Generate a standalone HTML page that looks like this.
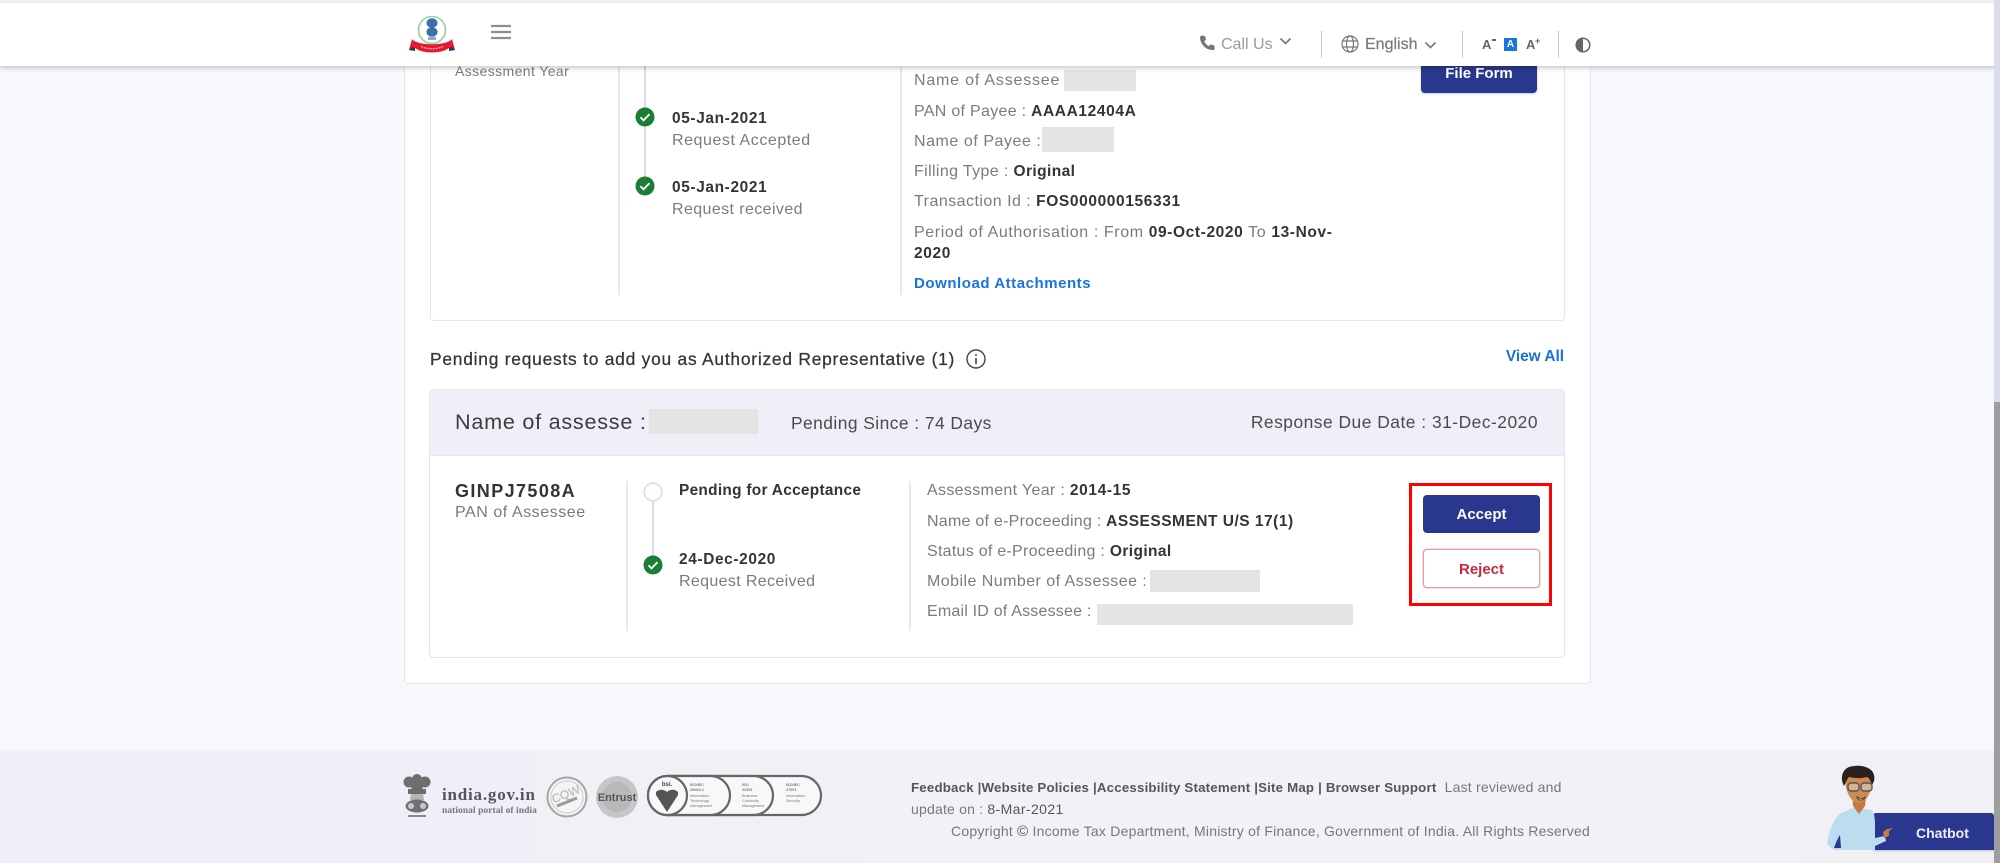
<!DOCTYPE html>
<html lang="en">
<head>
<meta charset="utf-8">
<title>Pending requests</title>
<style>
html,body{margin:0;padding:0;width:2000px;height:863px;overflow:hidden;background:#f7f8fc;font-family:"Liberation Sans",sans-serif}
#p{position:relative;width:2000px;height:863px;overflow:hidden}
#p div,#p svg,#p span.a{position:absolute}
.t{line-height:20px;height:20px;white-space:nowrap;font-size:16px;letter-spacing:.55px;color:#7b7b7f}
.t b{font-weight:700;color:#333338;font-size:15.5px;letter-spacing:.62px}
.d{color:#333338;font-weight:700;font-size:15.4px;letter-spacing:.65px}
.g{background:#e4e4e4}
.v{width:2px;background:#e6e8f2}
.btn{background:#2a378f;border-radius:4px;color:#fff;font-weight:700;font-size:15px;text-align:center}
</style>
</head>
<body>
<div id="p">
<!-- outer card -->
<div style="left:404px;top:40px;width:1185px;height:642px;background:#fff;border:1px solid #e3e5f0;border-radius:0 0 4px 4px"></div>
<!-- top inner card -->
<div style="left:430px;top:40px;width:1133px;height:279px;background:#fff;border:1px solid #e3e5f0;border-radius:0 0 4px 4px"></div>
<div class="t" style="left:455px;top:61px;font-size:14px;letter-spacing:.4px">Assessment Year</div>
<div class="v" style="left:618px;top:60px;height:235px"></div>
<div class="v" style="left:900px;top:60px;height:235px"></div>
<div style="left:644px;top:60px;width:2px;height:126px;background:#d9dcee"></div>
<svg style="left:635px;top:107px" width="20" height="20" viewBox="0 0 20 20"><circle cx="10" cy="10" r="9.5" fill="#1c7d36"/><path d="M5.5 10.3l3 3 6-6" fill="none" stroke="#fff" stroke-width="1.8"/></svg>
<svg style="left:635px;top:176px" width="20" height="20" viewBox="0 0 20 20"><circle cx="10" cy="10" r="9.5" fill="#1c7d36"/><path d="M5.5 10.3l3 3 6-6" fill="none" stroke="#fff" stroke-width="1.8"/></svg>
<div class="t d" style="left:672px;top:109px">05-Jan-2021</div>
<div class="t" style="left:672px;top:131px">Request Accepted</div>
<div class="t d" style="left:672px;top:178px">05-Jan-2021</div>
<div class="t" style="left:672px;top:200px;letter-spacing:.4px">Request received</div>

<div class="t" style="left:914px;top:71px;letter-spacing:.8px">Name of Assessee</div>
<div class="g" style="left:1064px;top:70px;width:72px;height:21px"></div>
<div class="t" style="left:914px;top:102px;letter-spacing:.3px">PAN of Payee : <b>AAAA12404A</b></div>
<div class="t" style="left:914px;top:132px">Name of Payee :</div>
<div class="g" style="left:1042px;top:127px;width:72px;height:25px"></div>
<div class="t" style="left:914px;top:162px;letter-spacing:.37px">Filling Type : <b style="letter-spacing:.4px">Original</b></div>
<div class="t" style="left:914px;top:192px;letter-spacing:.47px">Transaction Id : <b>FOS000000156331</b></div>
<div class="t" style="left:914px;top:223px;letter-spacing:.6px">Period of Authorisation : From <b>09-Oct-2020</b> To <b>13-Nov-</b></div>
<div class="t" style="left:914px;top:244px"><b>2020</b></div>
<div class="t" style="left:914px;top:274px;color:#1a73e0;font-weight:700;font-size:15px">Download Attachments</div>
<div class="btn" style="left:1421px;top:50px;width:116px;height:43px;line-height:47px;box-shadow:0 1px 2px rgba(0,0,0,.2)">File Form</div>

<!-- section heading -->
<div class="t" style="left:430px;top:349px;font-size:17.4px;letter-spacing:.76px;color:#333338;-webkit-text-stroke:.25px #333338">Pending requests to add you as Authorized Representative (1)</div>
<svg style="left:965px;top:348px" width="22" height="22" viewBox="0 0 22 22"><circle cx="11" cy="11" r="9" fill="none" stroke="#444" stroke-width="1.4"/><path d="M11 10v6M11 6.2v1.8" stroke="#444" stroke-width="1.6" fill="none"/></svg>
<div class="t" style="right:436px;top:347px;color:#1d6fd2;font-weight:700;font-size:15.4px;letter-spacing:0">View All</div>

<!-- card 2 -->
<div style="left:429px;top:389px;width:1134px;height:267px;background:#fff;border:1px solid #e3e5f0;border-radius:4px"></div>
<div style="left:430px;top:390px;width:1134px;height:65px;background:#eeeff7;border-bottom:1px solid #e3e5f0;border-radius:4px 4px 0 0"></div>
<div class="t" style="left:455px;top:412px;font-size:21.6px;letter-spacing:.75px;color:#3c3c42">Name of assesse :</div>
<div class="g" style="left:649px;top:409px;width:109px;height:25px"></div>
<div class="t" style="left:791px;top:413px;font-size:17.4px;letter-spacing:.45px;color:#4a4a50">Pending Since : 74 Days</div>
<div class="t" style="right:462px;top:412px;font-size:17.4px;letter-spacing:.5px;color:#4a4a50">Response Due Date : 31-Dec-2020</div>

<div class="t" style="left:455px;top:481px;font-size:18px;color:#333338;font-weight:700;letter-spacing:1.4px">GINPJ7508A</div>
<div class="t" style="left:455px;top:503px">PAN of Assessee</div>
<div class="v" style="left:626px;top:481px;height:150px"></div>
<div class="v" style="left:909px;top:481px;height:150px"></div>
<div style="left:652px;top:500px;width:2px;height:56px;background:#d9dcee"></div>
<svg style="left:643px;top:482px" width="20" height="20" viewBox="0 0 20 20"><circle cx="10" cy="10" r="8.8" fill="#fff" stroke="#d9dcee" stroke-width="1.6"/></svg>
<svg style="left:643px;top:555px" width="20" height="20" viewBox="0 0 20 20"><circle cx="10" cy="10" r="9.5" fill="#1c7d36"/><path d="M5.5 10.3l3 3 6-6" fill="none" stroke="#fff" stroke-width="1.8"/></svg>
<div class="t d" style="left:679px;top:481px;letter-spacing:.3px">Pending for Acceptance</div>
<div class="t d" style="left:679px;top:550px">24-Dec-2020</div>
<div class="t" style="left:679px;top:572px;letter-spacing:.35px">Request Received</div>

<div class="t" style="left:927px;top:481px;letter-spacing:.33px">Assessment Year : <b>2014-15</b></div>
<div class="t" style="left:927px;top:512px;letter-spacing:.25px">Name of e-Proceeding : <b style="letter-spacing:.5px">ASSESSMENT U/S 17(1)</b></div>
<div class="t" style="left:927px;top:542px;letter-spacing:.27px">Status of e-Proceeding : <b style="letter-spacing:.4px">Original</b></div>
<div class="t" style="left:927px;top:572px;letter-spacing:.45px">Mobile Number of Assessee :</div>
<div class="g" style="left:1150px;top:570px;width:110px;height:22px"></div>
<div class="t" style="left:927px;top:602px;letter-spacing:.2px">Email ID of Assessee :</div>
<div class="g" style="left:1097px;top:604px;width:256px;height:21px"></div>

<div style="left:1409px;top:483px;width:137px;height:117px;border:3px solid #f00"></div>
<div class="btn" style="left:1423px;top:495px;width:117px;height:38px;line-height:40px">Accept</div>
<div style="left:1423px;top:549px;width:115px;height:37px;line-height:39px;border:1px solid #ea9ca4;box-shadow:0 0 0 .5px #f0b6bb;border-radius:4px;background:#fff;color:#c8283c;font-weight:700;font-size:15px;text-align:center">Reject</div>

<!-- header -->
<div style="left:0;top:0;width:2000px;height:3px;background:#f2f2f2"></div>
<div style="left:0;top:3px;width:2000px;height:63px;background:#fff;box-shadow:0 2px 5px rgba(0,0,0,.22)"></div>
<svg style="left:405px;top:15px" width="54" height="40" viewBox="0 0 54 40">
<circle cx="27" cy="15" r="13.5" fill="none" stroke="#8fd0a8" stroke-width="1.6"/>
<ellipse cx="27" cy="8" rx="5.500" ry="4.800" fill="#3b70ad"/>
<ellipse cx="27" cy="17" rx="5.500" ry="4.800" fill="#3b70ad"/>
<rect x="23" y="22" width="8" height="3" fill="#9aa7b8"/>
<path d="M7 24C12 31 42 31 47 24L50 35 44 33C36 39 18 39 10 33L4 35z" fill="#e8192c"/>
<path d="M4 35l3-3 3 1 0 3zM50 35l-3-3-3 1 0 3z" fill="#27346f"/>
<path d="M16 31.500c7 3 15 3 22 0" fill="none" stroke="#f6c4c8" stroke-width="1.200" stroke-dasharray="2 1"/>
</svg>
<svg style="left:491px;top:24px" width="20" height="16" viewBox="0 0 20 16"><path d="M0 2h20M0 8h20M0 14h20" stroke="#8e8e8e" stroke-width="2.2"/></svg>
<svg style="left:1199px;top:34px" width="17" height="18" viewBox="0 0 17 18"><path d="M3 1.500l3 .6 1 3.600-1.800 1.600c.8 2 2.500 3.800 4.600 4.800l1.700-1.700 3.700 1 .6 3.100c-.3 1.200-1.300 1.700-2.400 1.600C6.500 15.600 1.600 10.500 1 3.900 1 2.700 1.800 1.700 3 1.500z" fill="#757575"/></svg>
<div class="t" style="left:1221px;top:35px;font-size:16px;letter-spacing:0;color:#9a9a9a">Call Us</div>
<svg style="left:1279px;top:37px" width="13" height="9" viewBox="0 0 13 9"><path d="M1.500 1.500l5 5 5-5" fill="none" stroke="#777" stroke-width="1.600"/></svg>
<div style="left:1321px;top:31px;width:1px;height:27px;background:#c8c8c8"></div>
<svg style="left:1341px;top:35px" width="18" height="18" viewBox="0 0 18 18"><g fill="none" stroke="#777" stroke-width="1.200"><circle cx="9" cy="9" r="8"/><ellipse cx="9" cy="9" rx="3.500" ry="8"/><path d="M1.500 6h15M1.500 12h15"/></g></svg>
<div class="t" style="left:1365px;top:35px;font-size:16px;letter-spacing:0;color:#777;-webkit-text-stroke:.2px #777">English</div>
<svg style="left:1424px;top:41px" width="13" height="9" viewBox="0 0 13 9"><path d="M1.500 1.500l5 5 5-5" fill="none" stroke="#777" stroke-width="1.600"/></svg>
<div style="left:1462px;top:31px;width:1px;height:27px;background:#c8c8c8"></div>
<div class="t" style="left:1482px;top:35px;font-size:13px;letter-spacing:0;color:#666;font-weight:700">A</div>
<div style="left:1492px;top:39px;width:4px;height:1.500px;background:#666"></div>
<div style="left:1504px;top:38px;width:13px;height:13px;line-height:13px;background:#1a73e0;color:#fff;font-size:10px;font-weight:700;text-align:center">A</div>
<div class="t" style="left:1526px;top:35px;font-size:13px;letter-spacing:0;color:#666;font-weight:700">A</div>
<div style="left:1535px;top:37px;font-size:9px;line-height:9px;color:#666;font-weight:700">+</div>
<div style="left:1558px;top:31px;width:1px;height:27px;background:#c8c8c8"></div>
<svg style="left:1575px;top:37px" width="16" height="16" viewBox="0 0 16 16"><circle cx="8" cy="8" r="6.800" fill="#fff" stroke="#666" stroke-width="1.500"/><path d="M8 1.500a6.500 6.500 0 0 0 0 13z" fill="#666"/></svg>

<!-- footer -->
<div style="left:0;top:750px;width:2000px;height:113px;background:#f1f1f5"></div>
<div style="left:0;top:750px;width:533px;height:113px;background:#eeeff7"></div>
<div style="left:870px;top:750px;width:930px;height:113px;background:#f1f2f7"></div>
<svg style="left:402px;top:773px" width="30" height="46" viewBox="0 0 30 46">
<g fill="#6e6e6e">
<circle cx="15" cy="6" r="5"/><circle cx="7" cy="9" r="5.500"/><circle cx="23" cy="9" r="5.500"/><circle cx="15" cy="13" r="6"/><rect x="6" y="16" width="18" height="5"/>
</g>
<path d="M9 21h12l1 6H8z" fill="#b5b5b8"/>
<ellipse cx="15" cy="33" rx="11.500" ry="6.500" fill="#707074"/>
<ellipse cx="9" cy="33" rx="3" ry="3" fill="#c8c8cc"/><ellipse cx="21" cy="33" rx="3" ry="3" fill="#c8c8cc"/>
<rect x="6" y="42" width="18" height="2" fill="#888"/>
</svg>
<div class="t" style="left:442px;top:785px;font-family:'Liberation Serif',serif;font-weight:700;font-size:17px;color:#55555c;letter-spacing:.8px">india.gov.in</div>
<div class="t" style="left:442px;top:801px;font-family:'Liberation Serif',serif;font-weight:700;font-size:9.500px;color:#77777d;letter-spacing:.05px">national portal of india</div>
<svg style="left:545px;top:775px" width="44" height="44" viewBox="0 0 44 44"><circle cx="22" cy="22" r="19.500" fill="#f4f4f6" stroke="#a5a5a5" stroke-width="2"/><circle cx="22" cy="22" r="16" fill="none" stroke="#ccc" stroke-width="1"/><text x="22" y="23" font-size="12" text-anchor="middle" fill="#b0b0b0" font-family="Liberation Sans" transform="rotate(-22 22 22)">CQW</text><path d="M12 31l20-8" stroke="#999" stroke-width="3"/></svg>
<svg style="left:595px;top:775px" width="44" height="44" viewBox="0 0 44 44"><circle cx="22" cy="22" r="21" fill="#c6c6c8"/><circle cx="22" cy="22" r="15" fill="#b8b8ba"/><text x="22" y="26" font-size="11" font-weight="700" text-anchor="middle" fill="#555" font-family="Liberation Sans">Entrust</text></svg>
<svg style="left:646px;top:774px" width="177" height="44" viewBox="0 0 177 44">
<g fill="#f8f8fa" stroke="#666" stroke-width="2.200">
<rect x="2" y="2" width="173" height="39" rx="19.500"/>
<rect x="2" y="2" width="125" height="39" rx="19.500"/>
<rect x="2" y="2" width="82" height="39" rx="19.500"/>
<circle cx="21.500" cy="21.500" r="19.500"/>
</g>
<path d="M10 18c3-3 8-3 11 0 3-3 8-3 11 0v3L21 38 10 21z" fill="#555"/>
<text x="21" y="12" font-size="6" font-weight="700" text-anchor="middle" fill="#444" font-family="Liberation Sans">bsi.</text>
<g font-family="Liberation Sans" font-size="3.800" fill="#777"><text x="44" y="12" font-weight="700">ISO/IEC</text><text x="44" y="17" font-weight="700">20000-1</text><text x="44" y="23">Information</text><text x="44" y="28">Technology</text><text x="44" y="33">Management</text><text x="96" y="12" font-weight="700">ISO</text><text x="96" y="17" font-weight="700">22301</text><text x="96" y="23">Business</text><text x="96" y="28">Continuity</text><text x="96" y="33">Management</text><text x="140" y="12" font-weight="700">ISO/IEC</text><text x="140" y="17" font-weight="700">27001</text><text x="140" y="23">Information</text><text x="140" y="28">Security</text></g>
</svg>
<div class="t" style="left:911px;top:777px;font-size:14px;letter-spacing:.2px;color:#777"><span style="color:#55555b;font-weight:700;font-size:13.300px;letter-spacing:.18px">Feedback |Website Policies |Accessibility Statement |Site Map | Browser Support</span>&nbsp; Last reviewed and</div>
<div class="t" style="left:911px;top:799px;font-size:14px;letter-spacing:.2px;color:#777">update on : <span style="color:#55555b;letter-spacing:.4px">8-Mar-2021</span></div>
<div class="t" style="left:951px;top:821px;font-size:14px;letter-spacing:.23px;color:#777">Copyright <span style="font-size:15px;color:#555">©</span> Income Tax Department, Ministry of Finance, Government of India. All Rights Reserved</div>

<!-- chatbot -->
<div style="left:1873px;top:813px;width:121px;height:37px;background:#2a378f;border-radius:3px 3px 0 0;box-shadow:0 1px 2px rgba(0,0,0,.2)"></div>
<div class="t" style="left:1916px;top:823px;color:#eef;font-weight:700;font-size:14px;letter-spacing:0">Chatbot</div>
<svg style="left:1826px;top:764px" width="72" height="88" viewBox="0 0 72 88">
<path d="M1 80c2-14 7-26 14-31l14-6 16 3c4 3 4 10 4 16v12l10-2 1 5-11 5v4H8z" fill="#bcdcf0"/>
<path d="M8 84c2-6 4-10 6-13l1 13z" fill="#2a378f"/>
<path d="M26 28l1 14 6 8 6-8 1-8z" fill="#c4793f"/>
<path d="M19 16c0-6 7-10 15-9 8 1 13 5 12 12-1 10-6 20-13 20-8 0-13-10-14-23z" fill="#cf8a50"/>
<path d="M18 22c-4-8-2-16 5-19 9-3 23-1 25 8 1 4 0 7-2 10-1-4-3-7-5-8-7 2-14 1-18 0-2 2-3 5-5 9z" fill="#2b211d"/>
<g fill="#dcdcdc" fill-opacity=".5" stroke="#555" stroke-width="1.400"><rect x="22" y="19" width="11" height="8" rx="3"/><rect x="35" y="19" width="11" height="8" rx="3"/></g>
<path d="M31 33c3 2 6 2 8 0-1 4-7 4-8 0z" fill="#fff" stroke="#4a2a18" stroke-width=".8"/>
<path d="M57 68l4-3 6-1-4 3 0 5-5 2z" fill="#c4793f"/>
</svg>

<!-- scrollbar -->
<div style="left:1994px;top:0;width:6px;height:402px;background:#d9dcec"></div>
<div style="left:1994px;top:402px;width:6px;height:461px;background:#9e9e9e"></div>
</div>
</body>
</html>
